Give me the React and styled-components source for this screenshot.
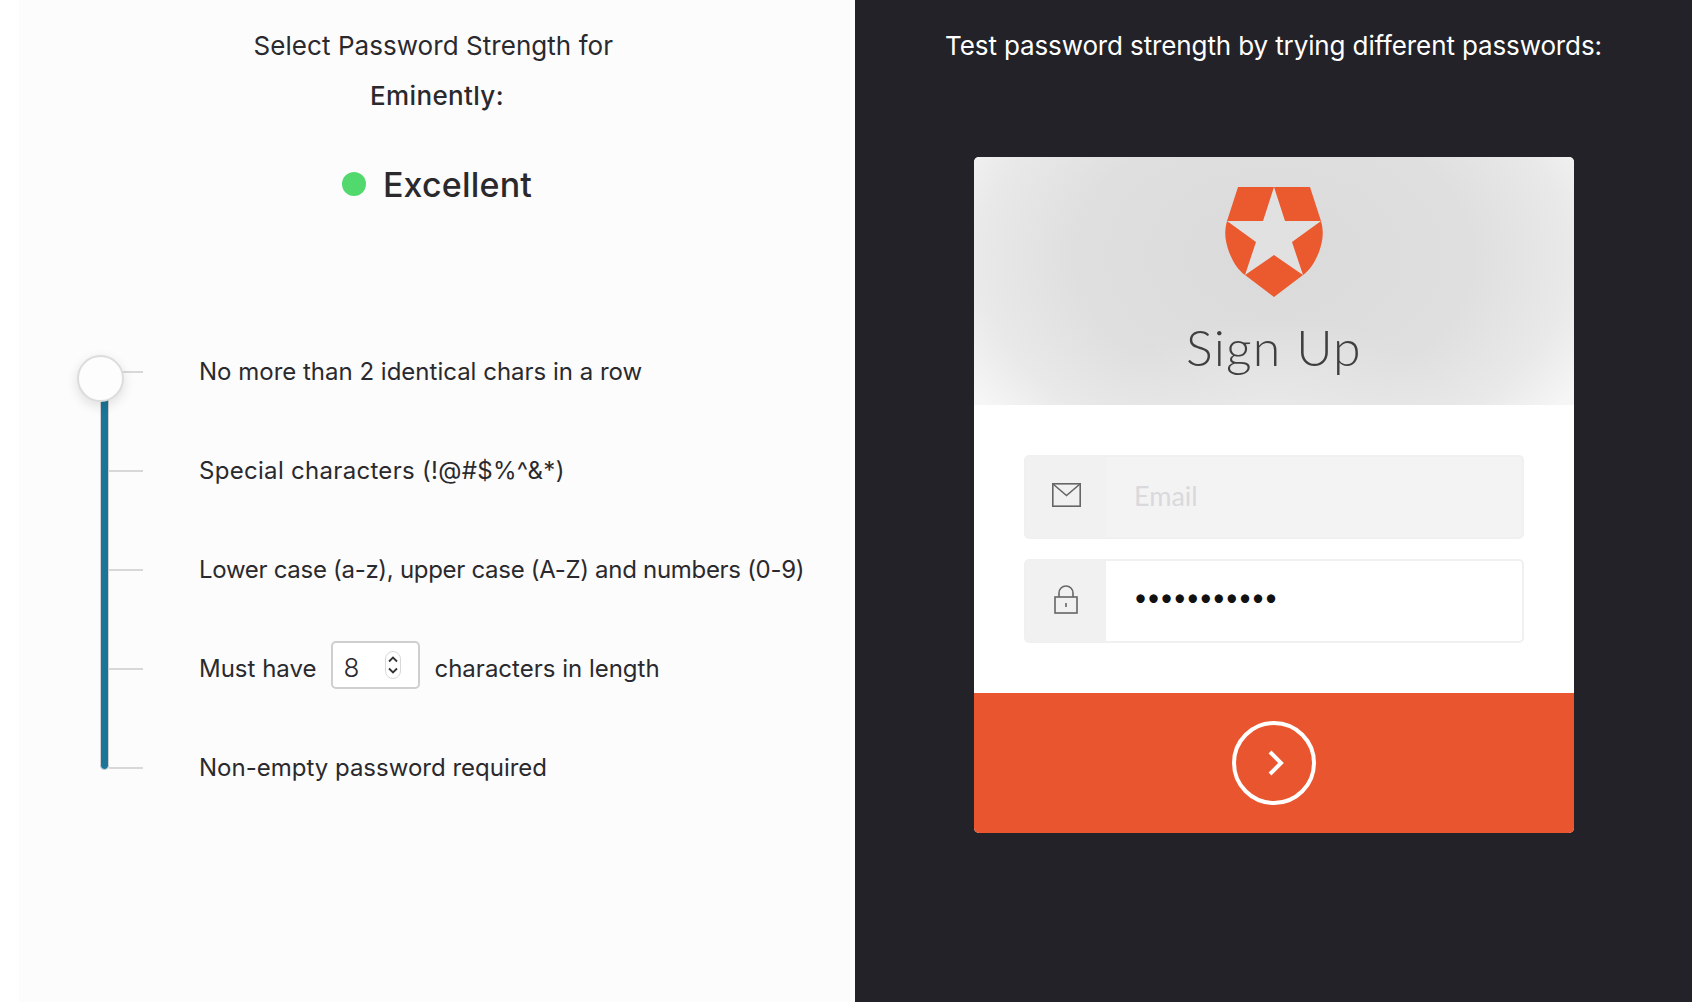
import React from 'react';
import styled, { createGlobalStyle } from 'styled-components';

const GlobalStyle = createGlobalStyle`
  html, body {
    margin: 0;
    padding: 0;
    background: #fff;
  }
  * {
    box-sizing: border-box;
  }
`;

const Page = styled.div`
  display: flex;
  height: 1002px;
  padding: 0 16px 0 19px;
  overflow: hidden;
  background: #fff;
  font-family: Inter, "Liberation Sans", sans-serif;
`;

const LeftPanel = styled.section`
  width: 836px;
  padding-top: 21px;
  background: #fcfcfc;
  color: #2a2a2e;
`;

const RightPanel = styled.section`
  flex: 1;
  display: flex;
  flex-direction: column;
  align-items: center;
  padding-top: 21px;
  background: #222228;
`;

const Title = styled.h2`
  margin: 0;
  font-size: 26px;
  font-weight: 400;
  line-height: 50px;
  letter-spacing: ${props => (props.$light ? '-0.12px' : '0.05px')};
  text-align: center;
  color: ${props => (props.$light ? '#fff' : '#2a2a2e')};
`;

const Product = styled.span`
  font-weight: 500;
  letter-spacing: 0.35px;
`;

const Status = styled.div`
  display: flex;
  align-items: center;
  justify-content: center;
  gap: 17px;
  height: 40px;
  margin-top: 43px;
  font-size: 34px;
  font-weight: 500;
  letter-spacing: 0.2px;
`;

const Dot = styled.span`
  width: 24px;
  height: 24px;
  border-radius: 50%;
  background: #52d96d;
`;

const Rules = styled.div`
  position: relative;
  margin: 118px 0 0 90px;
`;

const Rail = styled.div`
  position: absolute;
  top: 50px;
  left: -9px;
  width: 9px;
  height: 398px;
  border: 1px solid #d0d0d2;
  border-radius: 0 0 5px 5px;
  background: #1a7598;
`;

const Handle = styled.div`
  position: absolute;
  top: 33px;
  left: -32px;
  width: 47px;
  height: 47px;
  border: 2px solid #dcdcdc;
  border-radius: 50%;
  background: #fdfdfd;
  box-shadow: 0 4px 12px rgba(0, 0, 0, 0.12);
`;

const Row = styled.div`
  display: flex;
  align-items: center;
  height: 99px;
`;

const Tick = styled.span`
  flex: none;
  width: 34px;
  height: 2px;
  margin-right: 56px;
  background: #d8d8d8;
`;

const Label = styled.span`
  font-size: 24px;
  letter-spacing: ${props => props.$spacing || 0}px;
  white-space: nowrap;
`;

const NumberBox = styled.div`
  position: relative;
  width: 89px;
  height: 48px;
  margin: -8px 14px 0 15px;
  padding-left: 10px;
  border: 2px solid #cfcfcf;
  border-radius: 5px;
  background: #fff;
  font-size: 26px;
  font-weight: 300;
  line-height: 50px;
`;

const Spinner = styled.svg`
  position: absolute;
  top: 8px;
  right: 17px;
  width: 16px;
  height: 28px;
`;

const Card = styled.div`
  width: 600px;
  margin: 86px 0 0 1px;
  border-radius: 5px;
  overflow: hidden;
  background: #fff;
`;

const CardHeader = styled.header`
  display: flex;
  flex-direction: column;
  align-items: center;
  height: 248px;
  padding-top: 30px;
  background:
    radial-gradient(ellipse 30% 40% at 50% 105%, #e9e9e9, rgba(233, 233, 233, 0) 100%),
    radial-gradient(ellipse 60% 100% at 50% 40%, #dadada 0%, #dfdfdf 55%, #e9e9e9 82%, #f6f6f6 100%);
`;

const Logo = styled.svg`
  width: 100px;
  height: 110px;
`;

const CardTitle = styled.h1`
  margin: 20px 0 0;
  font-family: Lato, "Liberation Sans", sans-serif;
  font-size: 50px;
  font-weight: 300;
  line-height: 60px;
  letter-spacing: 1.2px;
  color: #3f3f3f;
`;

const Form = styled.div`
  display: flex;
  flex-direction: column;
  gap: 20px;
  padding: 50px;
`;

const Field = styled.div`
  display: flex;
  height: 84px;
  border: 2px solid #f0f0f0;
  border-radius: 5px;
  overflow: hidden;
  background: ${props => (props.$muted ? '#f3f3f3' : '#fff')};
`;

const FieldIcon = styled.div`
  flex: none;
  display: flex;
  align-items: center;
  justify-content: center;
  width: 80px;
  padding-bottom: 4px;
  background: #f1f1f1;
`;

const Input = styled.input`
  flex: 1;
  min-width: 0;
  height: ${props => (props.$muted ? '76px' : '72px')};
  padding: 0 0 0 28px;
  border: 0;
  outline: 0;
  background: transparent;
  font-family: Lato, "Liberation Sans", sans-serif;
  font-size: ${props => (props.$muted ? '27px' : '22.5px')};
  color: #111;

  &::placeholder {
    color: #d9d9dd;
    opacity: 1;
  }
`;

const Submit = styled.button`
  display: flex;
  align-items: center;
  justify-content: center;
  width: 100%;
  height: 140px;
  padding: 0;
  border: 0;
  background: #e9552e;
`;

const SubmitRing = styled.span`
  display: flex;
  align-items: center;
  justify-content: center;
  width: 84px;
  height: 84px;
  padding-left: 3px;
  border: 4px solid #fff;
  border-radius: 50%;
`;

const rules = [
  { text: 'No more than 2 identical chars in a row' },
  { text: 'Special characters (!@#$%^&*)', spacing: 0.3 },
  { text: 'Lower case (a-z), upper case (A-Z) and numbers (0-9)', spacing: -0.3 },
  { length: 8 },
  { text: 'Non-empty password required' },
];

const App = () => (
  <>
    <GlobalStyle />
    <Page>
      <LeftPanel>
        <Title>
          Select Password Strength for{'\u00a0'}
          <br />
          <Product>Eminently:</Product>
        </Title>
        <Status>
          <Dot />
          Excellent
        </Status>
        <Rules>
          <Rail />
          <Handle />
          {rules.map((rule, index) => (
            <Row key={index}>
              <Tick />
              {rule.text ? (
                <Label $spacing={rule.spacing}>{rule.text}</Label>
              ) : (
                <>
                  <Label>Must have</Label>
                  <NumberBox>
                    {rule.length}
                    <Spinner viewBox="0 0 16 28">
                      <rect x="0.5" y="0.5" width="15" height="27" rx="7.5" fill="#fff" stroke="#d8d8d8" />
                      <path d="M4 10.5 8 6.5l4 4M4 17.5l4 4 4-4" fill="none" stroke="#333" strokeWidth="1.8" />
                    </Spinner>
                  </NumberBox>
                  <Label>characters in length</Label>
                </>
              )}
            </Row>
          ))}
        </Rules>
      </LeftPanel>
      <RightPanel>
        <Title $light>Test password strength by trying different passwords:</Title>
        <Card>
          <CardHeader>
            <Logo viewBox="1224 187 100 110">
              <path
                d="M1238 187H1310L1321 221C1324 232 1323 241 1319 252C1315 262 1310 270 1303 275L1274 297L1245 275C1238 270 1233 262 1229 252C1225 241 1224 232 1227 221Z"
                fill="#eb5a2f"
              />
              <path
                d="M1274 187L1285 221H1321L1292 242L1303 275L1274 255L1245 275L1256 242L1227 221H1263Z"
                fill="#e1e1e1"
              />
            </Logo>
            <CardTitle>Sign Up</CardTitle>
          </CardHeader>
          <Form>
            <Field $muted>
              <FieldIcon>
                <svg width="29" height="24" viewBox="0 0 29 24" fill="none" stroke="#666" strokeWidth="1.6">
                  <rect x="0.8" y="0.8" width="27.4" height="22.4" />
                  <path d="M1 1l13.5 11.5L28 1" />
                </svg>
              </FieldIcon>
              <Input $muted type="email" placeholder="Email" readOnly />
            </Field>
            <Field>
              <FieldIcon>
                <svg width="24" height="29" viewBox="0 0 24 29" fill="none" stroke="#666" strokeWidth="1.6">
                  <rect x="1" y="12" width="22" height="16" />
                  <path d="M5 12V8a7 7 0 0 1 14 0v4M12 18v4" />
                </svg>
              </FieldIcon>
              <Input type="password" value="aaaaaaaaaaa" readOnly />
            </Field>
          </Form>
          <Submit type="button" aria-label="Submit">
            <SubmitRing>
              <svg width="16" height="26" viewBox="0 0 16 26" fill="none" stroke="#fff" strokeWidth="4">
                <path d="M2 2l11 11L2 24" />
              </svg>
            </SubmitRing>
          </Submit>
        </Card>
      </RightPanel>
    </Page>
  </>
);

export default App;
